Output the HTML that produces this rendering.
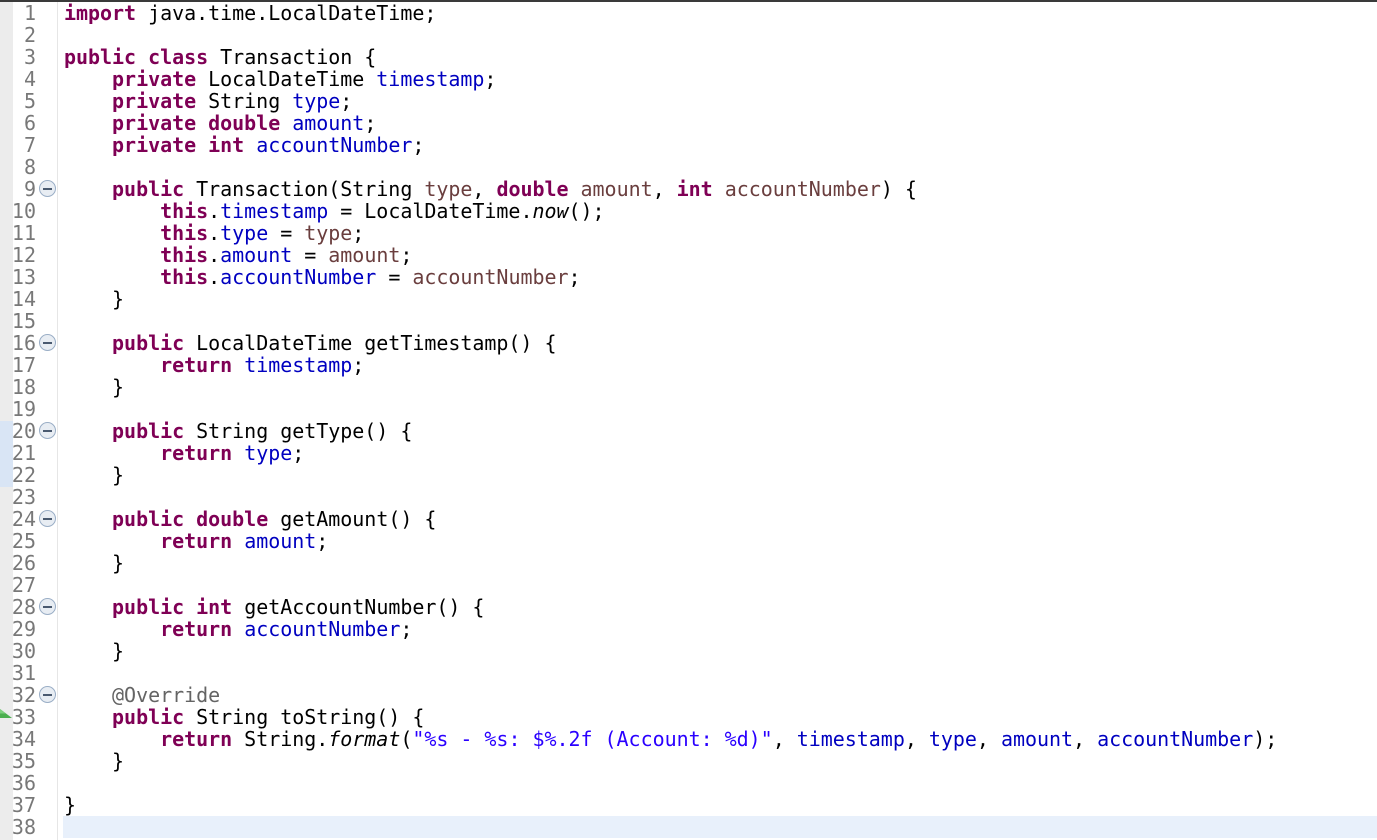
<!DOCTYPE html>
<html><head><meta charset="utf-8"><style>
html,body{margin:0;padding:0;background:#fff;width:1377px;height:840px;overflow:hidden}
.top{position:absolute;left:0;top:0;width:1377px;height:2px;background:#3a3a3a}
.strip{position:absolute;left:0;top:2px;width:13px;height:838px;background:#ececec}
.gut{position:absolute;left:13px;top:2px;width:44px;height:838px;background:#fff}
.sep{position:absolute;left:57px;top:2px;width:1px;height:838px;background:#e6e6e6}
.hl{position:absolute;left:63px;top:816px;width:1314px;height:22px;background:#e8f0fb}
.qd{position:absolute;left:0;top:421px;width:13px;height:66px;background:#d4e3f7;opacity:.8}
.nums{position:absolute;left:0;top:2px;width:36px;text-align:right;color:#787878}
.code{position:absolute;left:64px;top:2px;color:#000;letter-spacing:-0.03px}
.nums div,.code div{height:22px;line-height:22px;white-space:pre}
*{font-family:"DejaVu Sans Mono","Liberation Mono",monospace;font-size:20px}
.k{color:#7f0055;font-weight:bold}.f{color:#0000c0}.v{color:#6a3e3e}.s{color:#2a00ff}.a{color:#646464}.i{font-style:italic}
.fold{position:absolute;left:39px;width:17px;height:17px;border:1px solid #9aaec6;border-radius:50%;box-sizing:border-box;background:#e8edf3}
.fold:after{content:"";position:absolute;left:3px;top:6.5px;width:9px;height:2px;background:#4a5a70}
</style></head><body>
<div class="top"></div><div class="strip"></div><div class="qd"></div><div class="gut"></div><div class="sep"></div><div class="hl"></div>
<svg style="position:absolute;left:0;top:707px" width="14" height="12"><polygon points="0,2 12,11 0,11" fill="#4caf50"/><polygon points="0,2 6,6.5 0,6.5" fill="#7fcf7f"/></svg>
<div class="fold" style="top:180px"></div><div class="fold" style="top:334px"></div><div class="fold" style="top:422px"></div><div class="fold" style="top:510px"></div><div class="fold" style="top:598px"></div><div class="fold" style="top:686px"></div>
<div class="nums"><div>1</div><div>2</div><div>3</div><div>4</div><div>5</div><div>6</div><div>7</div><div>8</div><div>9</div><div>10</div><div>11</div><div>12</div><div>13</div><div>14</div><div>15</div><div>16</div><div>17</div><div>18</div><div>19</div><div>20</div><div>21</div><div>22</div><div>23</div><div>24</div><div>25</div><div>26</div><div>27</div><div>28</div><div>29</div><div>30</div><div>31</div><div>32</div><div>33</div><div>34</div><div>35</div><div>36</div><div>37</div><div>38</div></div>
<div class="code">
<div><span class="k">import</span> java.time.LocalDateTime;</div>
<div> </div>
<div><span class="k">public</span> <span class="k">class</span> Transaction {</div>
<div>    <span class="k">private</span> LocalDateTime <span class="f">timestamp</span>;</div>
<div>    <span class="k">private</span> String <span class="f">type</span>;</div>
<div>    <span class="k">private</span> <span class="k">double</span> <span class="f">amount</span>;</div>
<div>    <span class="k">private</span> <span class="k">int</span> <span class="f">accountNumber</span>;</div>
<div> </div>
<div>    <span class="k">public</span> Transaction(String <span class="v">type</span>, <span class="k">double</span> <span class="v">amount</span>, <span class="k">int</span> <span class="v">accountNumber</span>) {</div>
<div>        <span class="k">this</span>.<span class="f">timestamp</span> = LocalDateTime.<span class="i">now</span>();</div>
<div>        <span class="k">this</span>.<span class="f">type</span> = <span class="v">type</span>;</div>
<div>        <span class="k">this</span>.<span class="f">amount</span> = <span class="v">amount</span>;</div>
<div>        <span class="k">this</span>.<span class="f">accountNumber</span> = <span class="v">accountNumber</span>;</div>
<div>    }</div>
<div> </div>
<div>    <span class="k">public</span> LocalDateTime getTimestamp() {</div>
<div>        <span class="k">return</span> <span class="f">timestamp</span>;</div>
<div>    }</div>
<div> </div>
<div>    <span class="k">public</span> String getType() {</div>
<div>        <span class="k">return</span> <span class="f">type</span>;</div>
<div>    }</div>
<div> </div>
<div>    <span class="k">public</span> <span class="k">double</span> getAmount() {</div>
<div>        <span class="k">return</span> <span class="f">amount</span>;</div>
<div>    }</div>
<div> </div>
<div>    <span class="k">public</span> <span class="k">int</span> getAccountNumber() {</div>
<div>        <span class="k">return</span> <span class="f">accountNumber</span>;</div>
<div>    }</div>
<div> </div>
<div>    <span class="a">@Override</span></div>
<div>    <span class="k">public</span> String toString() {</div>
<div>        <span class="k">return</span> String.<span class="i">format</span>(<span class="s">"%s - %s: $%.2f (Account: %d)"</span>, <span class="f">timestamp</span>, <span class="f">type</span>, <span class="f">amount</span>, <span class="f">accountNumber</span>);</div>
<div>    }</div>
<div> </div>
<div>}</div>
<div> </div>
</div>
</body></html>
